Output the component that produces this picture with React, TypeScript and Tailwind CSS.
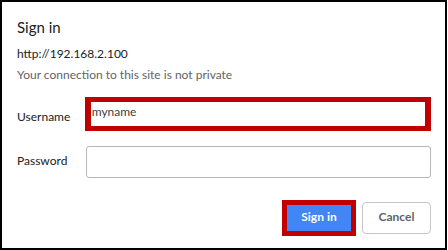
import React from "react";

export default function App() {
  return (
    <div className="w-[447px] h-[250px] border-2 border-black bg-white font-['Lato',sans-serif] text-[#202124]">
      <div className="flex flex-col pl-[15px] pr-[14px] pt-[14px]">
        <div className="text-[15px] leading-[22px] text-[#202124]">Sign in</div>
        <div className="mt-[7px] text-[12px] leading-[18px] text-[#202124]">http://192.168.2.100</div>
        <div className="mt-[3px] text-[12px] leading-[18px] text-[#5f6368]">Your connection to this site is not private</div>

        <div className="mt-[13px] flex items-start">
          <div className="w-[68px] mt-[11px] text-[12px] leading-[18px] text-[#202124]">Username</div>
          <div className="w-[348px] h-[34px] border-x-[6px] border-y-[5px] border-[#c00000] bg-white">
            <div className="pl-[1px] pt-[1px] text-[12px] leading-[18px] text-[#3c4043]">myname</div>
          </div>
        </div>

        <div className="mt-[15px] flex items-start">
          <div className="w-[69px] mt-[6px] text-[12px] leading-[18px] text-[#202124]">Password</div>
          <div className="w-[345px] h-[32px] rounded-[3px] border border-[#b7b7b7] bg-white" />
        </div>

        <div className="mt-[22px] flex items-center justify-end">
          <div className="w-[74px] h-[36px] border-[5px] border-[#c00000] bg-[#4285f4] flex items-center justify-center pb-[2px]">
            <span className="text-[12px] leading-[18px] font-bold text-white">Sign in</span>
          </div>
          <div className="ml-[6px] w-[69px] h-[32px] rounded-[4px] border border-[#c6c6c6] bg-white flex items-center justify-center pb-[2px]">
            <span className="text-[12px] leading-[18px] font-bold text-[#5f6368]">Cancel</span>
          </div>
        </div>
      </div>
    </div>
  );
}
